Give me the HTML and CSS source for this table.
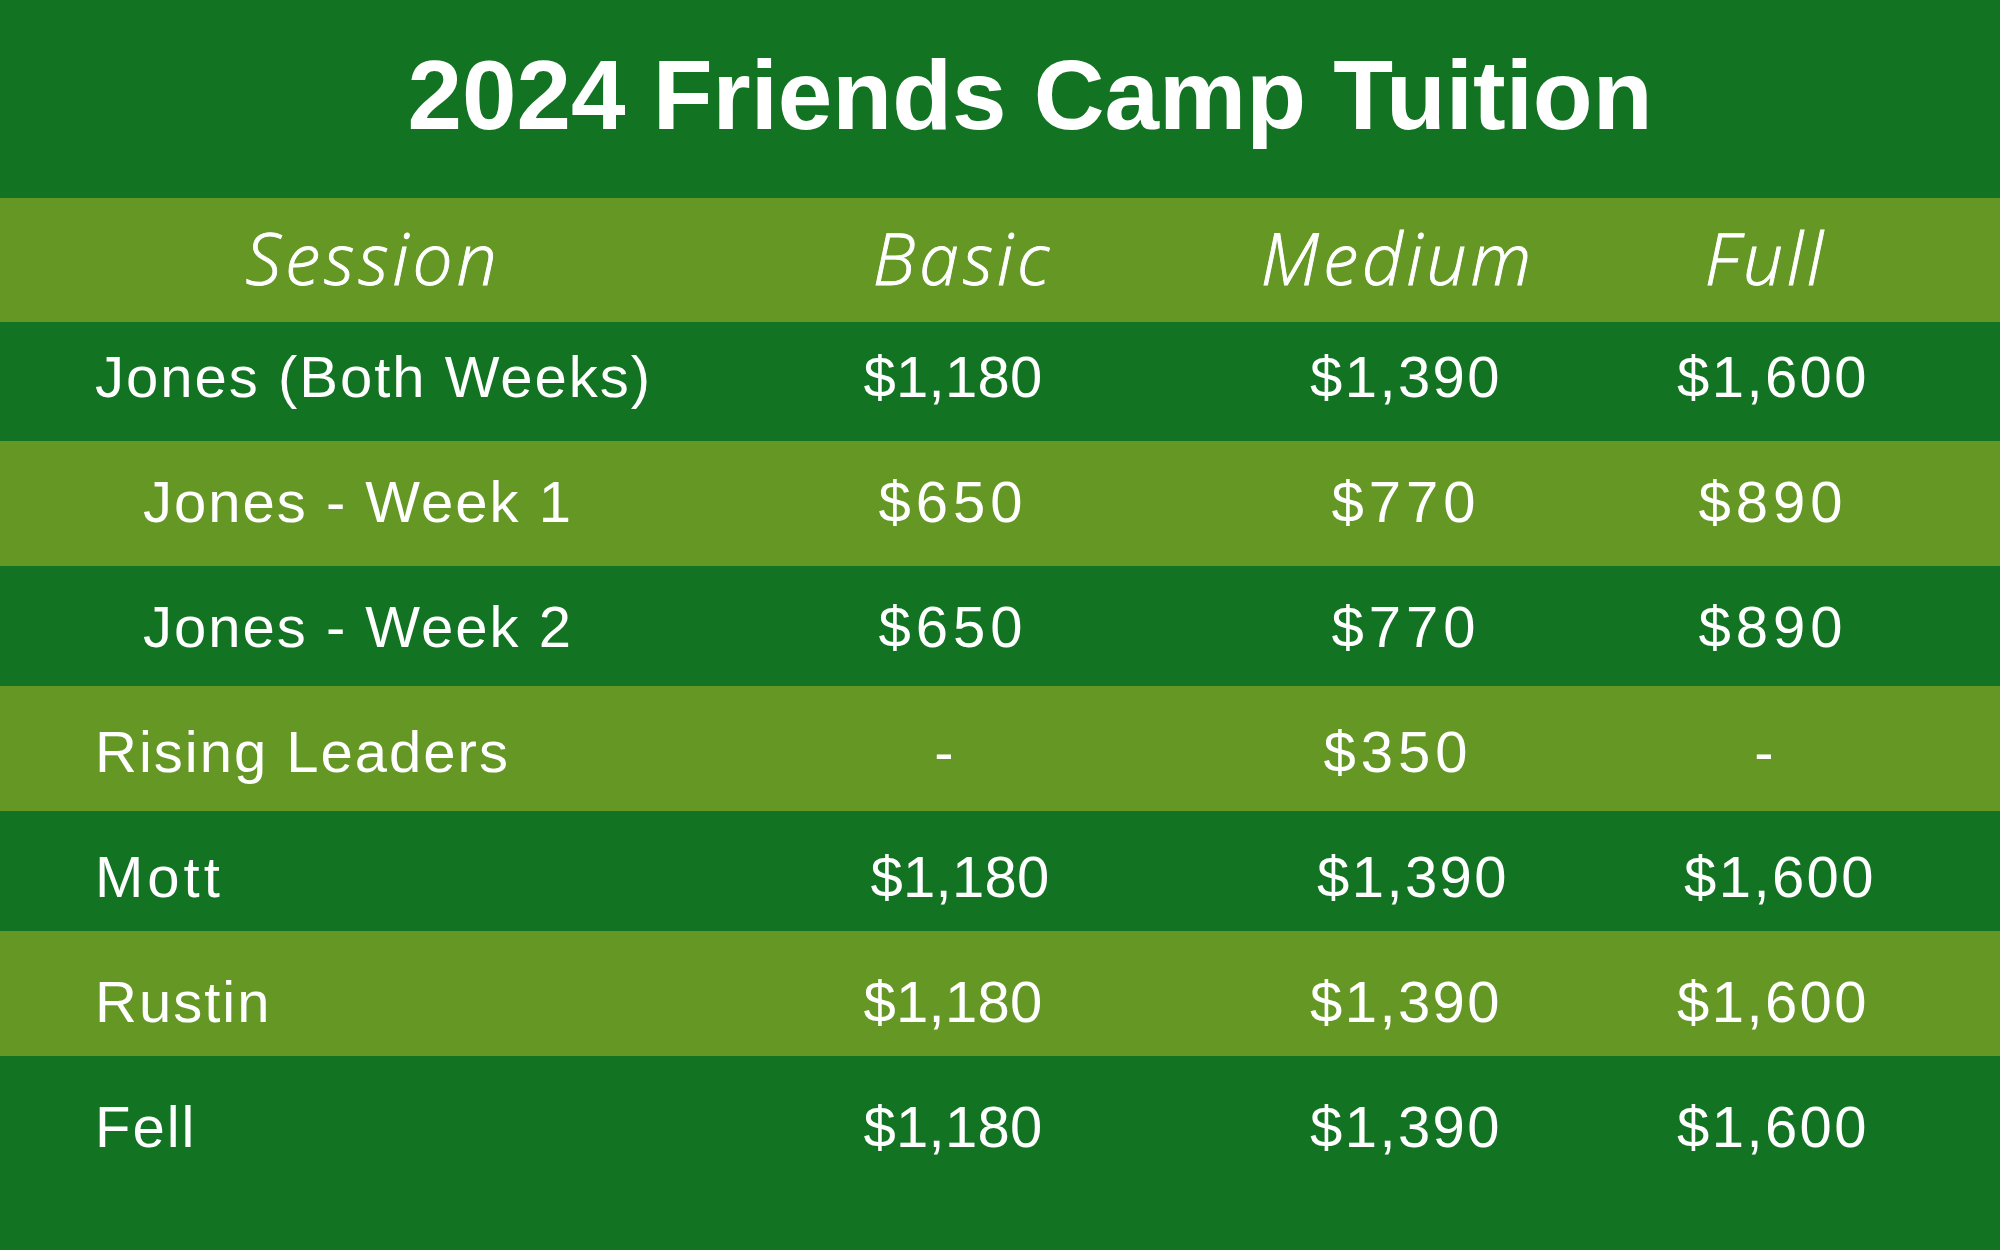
FILE: index.html
```html
<!DOCTYPE html>
<html lang="en">
<head>
<meta charset="utf-8">
<title>2024 Friends Camp Tuition</title>
<link rel="stylesheet" href="styles.css">
</head>
<body>
<main class="sheet">
  <header class="title-band">
    <h1 class="title">2024 Friends Camp Tuition</h1>
  </header>
  <section class="table">
    <div class="row head light">
      <div class="cell first">Session</div>
      <div class="cell basic">Basic</div>
      <div class="cell medium">Medium</div>
      <div class="cell full">Full</div>
    </div>
    <div class="row dark h119 pad-a">
      <div class="cell name">Jones (Both Weeks)</div>
      <div class="cell big ones">$1,180</div>
      <div class="cell big">$1,390</div>
      <div class="cell big">$1,600</div>
    </div>
    <div class="row light h125 pad-b">
      <div class="cell name sub">Jones - Week 1</div>
      <div class="cell small">$650</div>
      <div class="cell small">$770</div>
      <div class="cell small">$890</div>
    </div>
    <div class="row dark h120 pad-b">
      <div class="cell name sub">Jones - Week 2</div>
      <div class="cell small">$650</div>
      <div class="cell small">$770</div>
      <div class="cell small">$890</div>
    </div>
    <div class="row light h125 pad-c shift-left">
      <div class="cell name">Rising Leaders</div>
      <div class="cell">-</div>
      <div class="cell small">$350</div>
      <div class="cell">-</div>
    </div>
    <div class="row dark h120 pad-c shift-right">
      <div class="cell name wide">Mott</div>
      <div class="cell big ones">$1,180</div>
      <div class="cell big">$1,390</div>
      <div class="cell big">$1,600</div>
    </div>
    <div class="row light h125 pad-d">
      <div class="cell name">Rustin</div>
      <div class="cell big ones">$1,180</div>
      <div class="cell big">$1,390</div>
      <div class="cell big">$1,600</div>
    </div>
    <div class="row dark last pad-d">
      <div class="cell name">Fell</div>
      <div class="cell big ones">$1,180</div>
      <div class="cell big">$1,390</div>
      <div class="cell big">$1,600</div>
    </div>
  </section>
</main>
</body>
</html>
```

FILE: styles.css
```css
html, body {
  margin: 0;
  padding: 0;
  background: #127322;
}

body {
  width: 2000px;
  height: 1250px;
  overflow: hidden;
  color: #ffffff;
  font-family: "Liberation Sans", Arial, sans-serif;
}

.sheet {
  display: flex;
  flex-direction: column;
  width: 2000px;
  height: 1250px;
}

.title-band {
  height: 198px;
  box-sizing: border-box;
  padding: 46px 0 0 60px;
  background: #127322;
}

.title {
  margin: 0;
  font-family: "Liberation Sans", Arial, sans-serif;
  font-weight: 700;
  font-size: 98px;
  line-height: 98px;
  text-align: center;
  white-space: nowrap;
}

.table {
  display: flex;
  flex-direction: column;
  flex: 1;
}

.row {
  display: grid;
  grid-template-columns: 753px 400px 506px 228px 1fr;
  align-items: start;
  box-sizing: border-box;
  font-size: 58px;
  line-height: 58px;
  letter-spacing: 2px;
  white-space: nowrap;
}

.light { background: #659725; }
.dark { background: #127322; }

.h119 { height: 119px; }
.h120 { height: 120px; }
.h125 { height: 125px; }
.last { flex: 1; }

.pad-a { padding-top: 26px; }
.pad-b { padding-top: 32px; }
.pad-c { padding-top: 37px; }
.pad-d { padding-top: 42px; }

.cell {
  text-align: center;
  box-sizing: border-box;
}

.cell.big { letter-spacing: 2.4px; }
.cell.big.ones { letter-spacing: 0.3px; }
.cell.small { letter-spacing: 5px; }

.cell.name {
  text-align: left;
  padding-left: 95px;
}

.cell.name.sub {
  padding-left: 143px;
}

.cell.name.wide { letter-spacing: 4px; }

.shift-left .cell:not(.name) { padding-right: 16px; }
.shift-right .cell:not(.name) { padding-left: 14px; }

/* header row */
.head {
  height: 124px;
  padding-top: 24px;
  font-family: "Open Sans", "Noto Sans", sans-serif;
  font-style: italic;
  font-weight: 300;
  font-size: 71px;
  line-height: 71px;
  letter-spacing: 4px;
  -webkit-text-stroke: 0.9px #ffffff;
}

.head .first { padding-right: 7px; }
.head .basic { padding-left: 20px; }
.head .medium { padding-right: 16px; }
.head .full { padding-right: 14px; }
```
